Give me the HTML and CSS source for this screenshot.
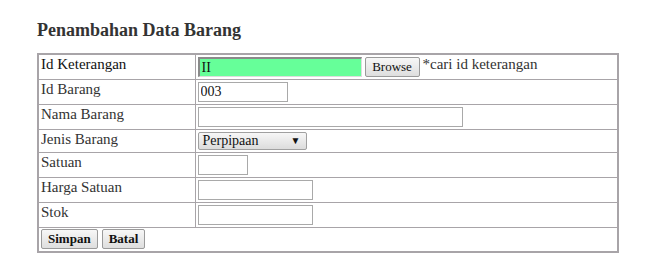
FILE: index.html
```html
<!DOCTYPE html>
<html>
<head>
<meta charset="utf-8">
<link rel="stylesheet" href="styles.css">
</head>
<body>
<div class="page">
  <h3 class="title">Penambahan Data Barang</h3>
  <table class="form-table">
    <tr class="row">
      <td class="label label-first">Id Keterangan</td>
      <td class="field">
        <span class="inline">
          <input class="input input-ket" type="text" value="II">
          <button class="btn btn-browse" type="button">Browse</button>
          <span class="hint">*cari id keterangan</span>
        </span>
      </td>
    </tr>
    <tr class="row">
      <td class="label">Id Barang</td>
      <td class="field"><input class="input input-id" type="text" value="003"></td>
    </tr>
    <tr class="row">
      <td class="label">Nama Barang</td>
      <td class="field"><input class="input input-nama" type="text"></td>
    </tr>
    <tr class="row row-select">
      <td class="label">Jenis Barang</td>
      <td class="field">
        <span class="select"><span class="select-text">Perpipaan</span><span class="select-arrow">▼</span></span>
      </td>
    </tr>
    <tr class="row">
      <td class="label">Satuan</td>
      <td class="field"><input class="input input-satuan" type="text"></td>
    </tr>
    <tr class="row">
      <td class="label">Harga Satuan</td>
      <td class="field"><input class="input input-harga" type="text"></td>
    </tr>
    <tr class="row">
      <td class="label">Stok</td>
      <td class="field"><input class="input input-harga" type="text"></td>
    </tr>
    <tr class="row">
      <td class="actions" colspan="2">
        <span class="inline">
          <button class="btn btn-action" type="button">Simpan</button>
          <button class="btn btn-action" type="button">Batal</button>
        </span>
      </td>
    </tr>
  </table>
</div>
</body>
</html>
```

FILE: styles.css
```css
html, body {
  margin: 0;
  padding: 0;
  background: #ffffff;
}

body {
  font-family: "Liberation Serif", "Times New Roman", serif;
  color: #333333;
}

.page {
  padding: 19px 0 0 37px;
}

.title {
  margin: 0 0 11px 0;
  font-size: 18px;
  font-weight: bold;
  color: #333333;
  line-height: 23px;
  height: 23px;
}

.form-table {
  width: 582px;
  border-collapse: collapse;
  border: 2px solid #a8a4a8;
  font-size: 15px;
}

.row td {
  border: 1px solid #a8a4a8;
  height: 25px;
  padding: 0 2px;
  box-sizing: border-box;
}

.row-select td {
  height: 23px;
}

.label {
  width: 157px;
  vertical-align: top;
  line-height: 18px;
  color: #333333;
  padding-top: 1px;
}

.label-first {
  color: #111111;
}

.field {
  vertical-align: middle;
}

.inline {
  display: flex;
  align-items: center;
  gap: 3px;
}

.input {
  display: block;
  box-sizing: border-box;
  height: 20px;
  margin: 0;
  padding: 1px 2px 0 2px;
  border: 1px solid #a9a9a9;
  background: #ffffff;
  font-family: "Liberation Serif", serif;
  font-size: 14px;
  color: #111111;
}

.input-ket {
  width: 164px;
  background: #66ff99;
  border-style: solid;
  border-width: 2px 1px 1px 2px;
  border-color: #8a8a8a #dddddd #dddddd #8a8a8a;
}

.input-id { width: 90px; }
.input-nama { width: 265px; }
.input-satuan { width: 50px; }
.input-harga { width: 115px; }

.btn {
  box-sizing: border-box;
  height: 20px;
  margin: 0;
  padding: 0 6px;
  border: 1px solid #9a9a9a;
  border-radius: 2px;
  background: linear-gradient(#f7f7f7, #dedede);
  font-family: "Liberation Serif", serif;
  color: #111111;
  line-height: 18px;
}

.btn-browse {
  width: 55px;
  font-size: 13px;
  font-weight: normal;
}

.hint {
  font-size: 15px;
  color: #333333;
  margin-top: -4px;
}

.btn-action {
  font-size: 13px;
  font-weight: bold;
  padding: 0 6px;
}

.actions .inline {
  gap: 4px;
}

.select {
  display: flex;
  align-items: center;
  justify-content: space-between;
  box-sizing: border-box;
  width: 109px;
  height: 18px;
  padding: 0 5px 0 4px;
  border: 1px solid #a0a0a0;
  border-radius: 2px;
  background: linear-gradient(#f7f7f7, #dcdcdc);
  font-size: 14px;
  color: #111111;
}

.select-text {
  font-weight: normal;
}

.select-arrow {
  font-size: 10px;
  color: #111111;
}
```
